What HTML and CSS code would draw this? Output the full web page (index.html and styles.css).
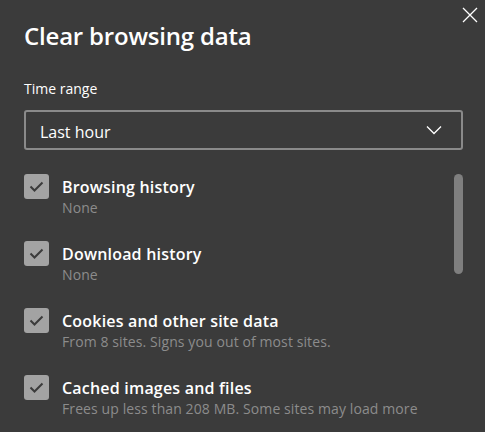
FILE: index.html
```html
<!DOCTYPE html>
<html lang="en">
<head>
<meta charset="utf-8">
<title>Clear browsing data</title>
<link rel="stylesheet" href="styles.css">
</head>
<body>
<div class="dialog">
  <button class="close" aria-label="Close">
    <svg width="16" height="16" viewBox="0 0 16 16"><path d="M1 1 L15 15 M15 1 L1 15" stroke="#ffffff" stroke-width="1.3" fill="none"/></svg>
  </button>
  <h1 class="title">Clear browsing data</h1>
  <div class="field-label">Time range</div>
  <div class="select">
    <span class="select-text">Last hour</span>
    <svg class="chevron" width="16" height="10" viewBox="0 0 16 10"><path d="M1 1.5 L8 8.5 L15 1.5" stroke="#ffffff" stroke-width="1.3" fill="none"/></svg>
  </div>
  <div class="list">
    <div class="row">
      <span class="check"><svg width="25" height="25" viewBox="0 0 25 25"><path d="M6.5 12.5 L10.5 16.5 L18.5 8.5" stroke="#3b3b3b" stroke-width="2" fill="none"/></svg></span>
      <div class="texts">
        <div class="label">Browsing history</div>
        <div class="sub">None</div>
      </div>
    </div>
    <div class="row">
      <span class="check"><svg width="25" height="25" viewBox="0 0 25 25"><path d="M6.5 12.5 L10.5 16.5 L18.5 8.5" stroke="#3b3b3b" stroke-width="2" fill="none"/></svg></span>
      <div class="texts">
        <div class="label">Download history</div>
        <div class="sub">None</div>
      </div>
    </div>
    <div class="row">
      <span class="check"><svg width="25" height="25" viewBox="0 0 25 25"><path d="M6.5 12.5 L10.5 16.5 L18.5 8.5" stroke="#3b3b3b" stroke-width="2" fill="none"/></svg></span>
      <div class="texts">
        <div class="label">Cookies and other site data</div>
        <div class="sub">From 8 sites. Signs you out of most sites.</div>
      </div>
    </div>
    <div class="row">
      <span class="check"><svg width="25" height="25" viewBox="0 0 25 25"><path d="M6.5 12.5 L10.5 16.5 L18.5 8.5" stroke="#3b3b3b" stroke-width="2" fill="none"/></svg></span>
      <div class="texts">
        <div class="label">Cached images and files</div>
        <div class="sub">Frees up less than 208 MB. Some sites may load more</div>
      </div>
    </div>
    <div class="scrollbar"></div>
  </div>
</div>
</body>
</html>
```

FILE: styles.css
```css
html, body {
  margin: 0;
  padding: 0;
  background: #3b3b3b;
}
body {
  width: 485px;
  height: 432px;
  overflow: hidden;
  font-family: "Open Sans", "Noto Sans", sans-serif;
  color: #ffffff;
}
.dialog {
  position: relative;
  padding: 20px 22px 0 24px;
}
.close {
  position: absolute;
  top: 7px;
  right: 7px;
  width: 16px;
  height: 16px;
  padding: 0;
  border: 0;
  background: none;
  display: flex;
}
.title {
  margin: 0;
  font-size: 24px;
  line-height: 32px;
  font-weight: 600;
  letter-spacing: -0.2px;
}
.field-label {
  margin-top: 27px;
  font-size: 14px;
  line-height: 20px;
}
.select {
  margin-top: 11px;
  height: 40px;
  box-sizing: border-box;
  border: 2px solid #8a8a8a;
  border-radius: 3px;
  display: flex;
  align-items: center;
  justify-content: space-between;
  padding: 3px 19px 0 14px;
}
.select-text {
  font-size: 16px;
  line-height: 22px;
}
.chevron {
  margin-top: -3px;
}
.list {
  position: relative;
  margin-top: 24px;
  display: flex;
  flex-direction: column;
  gap: 17px;
}
.row {
  display: flex;
  gap: 13px;
  align-items: flex-start;
  height: 50px;
}
.check {
  width: 25px;
  height: 25px;
  background: #a3a3a3;
  border-radius: 3px;
  display: flex;
  flex: none;
}
.texts {
  padding-top: 2px;
}
.label {
  font-size: 16px;
  line-height: 22px;
  font-weight: 600;
  letter-spacing: 0.2px;
}
.sub {
  font-size: 14px;
  line-height: 19px;
  color: #8c8c8c;
  letter-spacing: 0.1px;
}
.scrollbar {
  position: absolute;
  top: 0;
  right: 0;
  width: 9px;
  height: 100px;
  border-radius: 5px;
  background: #7f7f7f;
}
```
